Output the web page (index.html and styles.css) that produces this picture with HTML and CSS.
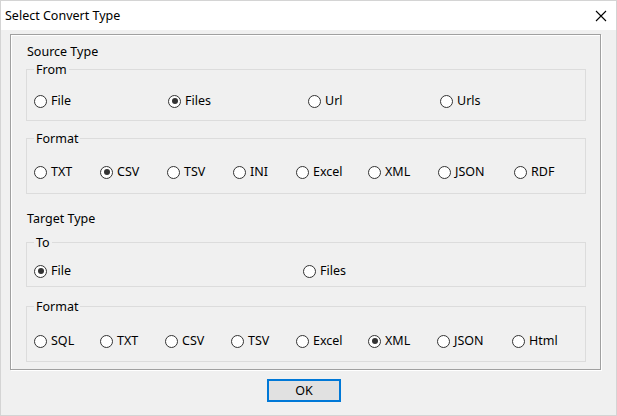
FILE: index.html
```html
<!DOCTYPE html>
<html>
<head>
<meta charset="utf-8">
<link rel="stylesheet" href="styles.css">
</head>
<body>
<div class="window">
  <div class="titlebar">
    <span class="title">Select Convert Type</span>
    <svg class="close" width="12" height="12" viewBox="0 0 12 12"><path d="M1 1 L11 11 M11 1 L1 11" stroke="#000" stroke-width="1.1" fill="none"/></svg>
  </div>
  <div class="client">
    <div class="outer">
      <div class="section">Source Type</div>
      <div class="group g-from">
        <span class="legend">From</span>
        <div class="row cols-from">
          <label class="radio"><span class="dot"></span>File</label>
          <label class="radio"><span class="dot on"></span>Files</label>
          <label class="radio"><span class="dot"></span>Url</label>
          <label class="radio"><span class="dot"></span>Urls</label>
        </div>
      </div>
      <div class="group g-fmt1">
        <span class="legend">Format</span>
        <div class="row cols-fmt1">
          <label class="radio"><span class="dot"></span>TXT</label>
          <label class="radio"><span class="dot on"></span>CSV</label>
          <label class="radio"><span class="dot"></span>TSV</label>
          <label class="radio"><span class="dot"></span>INI</label>
          <label class="radio"><span class="dot"></span>Excel</label>
          <label class="radio"><span class="dot"></span>XML</label>
          <label class="radio"><span class="dot"></span>JSON</label>
          <label class="radio"><span class="dot"></span>RDF</label>
        </div>
      </div>
      <div class="section sec-target">Target Type</div>
      <div class="group g-to">
        <span class="legend">To</span>
        <div class="row cols-to">
          <label class="radio"><span class="dot on"></span>File</label>
          <label class="radio"><span class="dot"></span>Files</label>
        </div>
      </div>
      <div class="group g-fmt2">
        <span class="legend">Format</span>
        <div class="row cols-fmt2">
          <label class="radio"><span class="dot"></span>SQL</label>
          <label class="radio"><span class="dot"></span>TXT</label>
          <label class="radio"><span class="dot"></span>CSV</label>
          <label class="radio"><span class="dot"></span>TSV</label>
          <label class="radio"><span class="dot"></span>Excel</label>
          <label class="radio"><span class="dot on"></span>XML</label>
          <label class="radio"><span class="dot"></span>JSON</label>
          <label class="radio"><span class="dot"></span>Html</label>
        </div>
      </div>
    </div>
    <div class="footer">
      <button class="btn">OK</button>
    </div>
  </div>
</div>
</body>
</html>
```
FILE: styles.css
```css
* { box-sizing: border-box; }
html, body { margin: 0; padding: 0; }
body {
  width: 617px;
  height: 416px;
  overflow: hidden;
  font-family: "Noto Sans", "Open Sans", sans-serif;
  font-size: 12.5px;
  color: #000;
  background: #f0f0f0;
}
.window {
  width: 617px;
  height: 416px;
  border: 1px solid #d4d4d4;
  background: #f0f0f0;
  display: flex;
  flex-direction: column;
}
.titlebar {
  height: 29px;
  background: #fff;
  display: flex;
  align-items: center;
  justify-content: space-between;
  padding: 0 9px 0 4px;
  flex: none;
}
.title { font-size: 12.5px; line-height: 16px; }
.close { display: block; }
.client {
  padding: 4px 0 0 9px;
}
.outer {
  width: 591px;
  height: 336px;
  border: 1px solid #a0a0a0;
  box-shadow: inset 1px 1px 0 #fff, 1px 1px 0 #fff;
  padding: 8px 14px 7px 15px;
  display: flex;
  flex-direction: column;
}
.section { line-height: 16px; height: 16px; padding-left: 1px; padding-top: 1px; }
.sec-target { margin-top: 16px; }
.group {
  position: relative;
  border: 1px solid #dcdcdc;
  padding-left: 7px;
}
.legend {
  position: absolute;
  top: -8px;
  left: 7px;
  padding: 0 2px;
  line-height: 16px;
  background: #f0f0f0;
}
.g-from { margin-top: 10px; height: 52px; padding-top: 23px; }
.g-fmt1 { margin-top: 17px; height: 56px; padding-top: 25px; }
.g-to { margin-top: 16px; height: 45px; padding-top: 20px; }
.g-fmt2 { margin-top: 19px; height: 56px; padding-top: 26px; }
.row { display: grid; height: 16px; }
.cols-from { grid-template-columns: 134px 140px 132px 1fr; }
.cols-fmt1 { grid-template-columns: 66px 67px 66px 63px 72px 70px 76px 1fr; }
.cols-to { grid-template-columns: 269px 1fr; }
.cols-fmt2 { grid-template-columns: 66px 65px 66px 65px 72px 69px 75px 1fr; }
.radio {
  display: flex;
  align-items: center;
  line-height: 16px;
  white-space: nowrap;
}
.dot {
  width: 13px;
  height: 13px;
  border: 1px solid #333;
  border-radius: 50%;
  background: #fff;
  margin-right: 4px;
  flex: none;
  position: relative;
}
.dot.on::after {
  content: "";
  position: absolute;
  left: 2.5px;
  top: 2.5px;
  width: 6px;
  height: 6px;
  border-radius: 50%;
  background: #333;
}
.footer {
  padding: 9px 0 0 257px;
}
.btn {
  width: 74px;
  height: 23px;
  border: 2px solid #0078d7;
  background: #e1e1e1;
  font-family: "Noto Sans", "Open Sans", sans-serif;
  font-size: 12.5px;
  color: #000;
  padding: 0;
  line-height: 17px;
}
```
